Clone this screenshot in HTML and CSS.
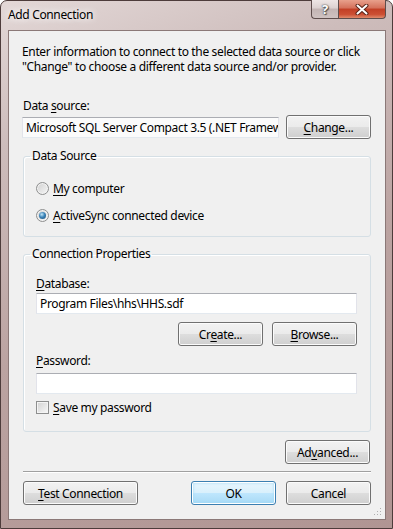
FILE: index.html
```html
<!DOCTYPE html>
<html lang="en">
<head>
    <meta charset="UTF-8">
    <meta name="viewport" content="width=device-width, initial-scale=1.0">
    <title>Add Connection</title>
    <link rel="stylesheet" href="styles.css">
</head>
<body>
    <div class="window">
        <div class="titlebar">
            <span class="title">Add Connection</span>
            <div class="caption-buttons">
                <span class="cap-btn help">?</span>
                <span class="cap-btn close">
                    <svg width="14" height="11" viewBox="0 0 14 11">
                        <path d="M2.5 1.5 L11.5 9.5 M11.5 1.5 L2.5 9.5" stroke="#5a2418" stroke-width="4" stroke-linecap="round"/>
                        <path d="M2.5 1.5 L11.5 9.5 M11.5 1.5 L2.5 9.5" stroke="#fff" stroke-width="2" stroke-linecap="round"/>
                    </svg>
                </span>
            </div>
        </div>

        <div class="client">
            <p class="intro">Enter information to connect to the selected data source or click<br>"Change" to choose a different data source and/or provider.</p>

            <label class="field-label">Data <u>s</u>ource:</label>
            <div class="source-row">
                <div class="textbox readonly">Microsoft SQL Server Compact 3.5 (.NET Framework Data Provider for SQL Server Compact 3.5)</div>
                <button type="button" class="btn"><u>C</u>hange...</button>
            </div>

            <fieldset class="group source-group">
                <legend>Data Source</legend>
                <label class="option">
                    <span class="radio"></span>
                    <span><u>M</u>y computer</span>
                </label>
                <label class="option">
                    <span class="radio checked"><span class="dot"></span></span>
                    <span><u>A</u>ctiveSync connected device</span>
                </label>
            </fieldset>

            <fieldset class="group props-group">
                <legend>Connection Properties</legend>
                <label class="field-label"><u>D</u>atabase:</label>
                <div class="textbox db-box">Program Files\hhs\HHS.sdf</div>
                <div class="btn-row">
                    <button type="button" class="btn">Cr<u>e</u>ate...</button>
                    <button type="button" class="btn"><u>B</u>rowse...</button>
                </div>
                <label class="field-label pw-label"><u>P</u>assword:</label>
                <div class="textbox pw-box"></div>
                <label class="option check-row">
                    <span class="checkbox"></span>
                    <span><u>S</u>ave my password</span>
                </label>
            </fieldset>

            <div class="advanced-row">
                <button type="button" class="btn">Ad<u>v</u>anced...</button>
            </div>

            <div class="separator"></div>

            <div class="footer">
                <button type="button" class="btn wide"><u>T</u>est Connection</button>
                <div class="footer-right">
                    <button type="button" class="btn default">OK</button>
                    <button type="button" class="btn">Cancel</button>
                </div>
            </div>

            <svg class="grip" width="8" height="8" viewBox="0 0 8 8">
                <rect x="6" y="0" width="1" height="1" fill="#b0b0b0"/>
                <rect x="3" y="3" width="1" height="1" fill="#b0b0b0"/>
                <rect x="6" y="3" width="1" height="1" fill="#b0b0b0"/>
                <rect x="0" y="6" width="1" height="1" fill="#b0b0b0"/>
                <rect x="3" y="6" width="1" height="1" fill="#b0b0b0"/>
                <rect x="6" y="6" width="1" height="1" fill="#b0b0b0"/>
            </svg>
        </div>
    </div>
</body>
</html>
```

FILE: styles.css
```css
* {
    margin: 0;
    padding: 0;
    box-sizing: border-box;
}

body {
    font-family: "Noto Sans", "Segoe UI", Arial, sans-serif;
    font-size: 12px;
    line-height: 15px;
    letter-spacing: -0.35px;
    color: #000;
    background: #fff;
    width: 393px;
    height: 529px;
    overflow: hidden;
}

u {
    text-decoration-thickness: 1px;
    text-underline-offset: 2px;
}

/* aero frame */
.window {
    width: 393px;
    height: 529px;
    display: flex;
    flex-direction: column;
    padding: 0 6px 8px 7px;
    border: 1px solid #4d3c3b;
    border-radius: 7px 7px 0 0;
    background: linear-gradient(160deg, #e3d8d7 0%, #cdbcbb 22%, #bba3a1 55%, #b09593 100%);
}

.titlebar {
    height: 29px;
    display: flex;
    justify-content: space-between;
    align-items: flex-start;
}

.title {
    padding-top: 6px;
    text-shadow: 0 0 6px #fff, 0 0 10px #fff;
}

.caption-buttons {
    display: flex;
    margin-top: -1px;
}

.cap-btn {
    height: 19px;
    display: flex;
    align-items: center;
    justify-content: center;
    border: 1px solid #5e4d4c;
    border-top: none;
}

.cap-btn.help {
    width: 27px;
    border-right: none;
    border-radius: 0 0 0 4px;
    background: linear-gradient(#eee6e5 0%, #dcd1d0 45%, #c3b4b3 50%, #cfc2c1 100%);
    color: #fff;
    font-weight: bold;
    font-size: 13px;
    text-shadow: 0 0 1px #444, 0 0 2px #555, 1px 1px 1px #555;
}

.cap-btn.close {
    width: 48px;
    border-radius: 0 0 4px 0;
    background: linear-gradient(#e8a08c 0%, #d4705a 45%, #c23f26 50%, #cc4f33 80%, #e08a6c 100%);
}

/* dialog area */
.client {
    flex: 1;
    position: relative;
    display: flex;
    flex-direction: column;
    background: #f0f0f0;
    border: 1px solid #8b7877;
    padding: 13px 14px 0 14px;
}

.intro {
    margin-left: -1px;
    white-space: nowrap;
}

.field-label {
    display: block;
    margin-top: 24px;
}

.source-row {
    display: flex;
    align-items: center;
    gap: 7px;
    margin-top: 2px;
}

.textbox {
    height: 21px;
    padding: 2px 3px 0;
    background: #fff;
    border: 1px solid #e2e3ea;
    border-top-color: #abadb3;
    border-bottom-color: #e3e9ef;
    white-space: nowrap;
    overflow: hidden;
}

.textbox.readonly {
    flex: 1;
    background: #fbfbfb;
    margin-left: -1px;
}

.btn {
    height: 24px;
    width: 85px;
    font: inherit;
    letter-spacing: inherit;
    color: #000;
    border: 1px solid #707070;
    border-radius: 3px;
    background: linear-gradient(#f2f2f2 0%, #ebebeb 48%, #dddddd 52%, #cfcfcf 100%);
    box-shadow: inset 0 0 0 1px #fbfbfb;
}

.btn.wide {
    width: 115px;
}

.btn.default {
    border-color: #3c7fb1;
    background: linear-gradient(#eaf6fd 0%, #d9f0fc 48%, #bee6fd 52%, #a7d9f5 100%);
    box-shadow: inset 0 0 0 1px #fff, inset 0 0 3px 1px #9fd9f7;
}

/* group boxes */
.group {
    border: 1px solid #d5dfe5;
    border-radius: 3px;
    box-shadow: inset 1px 1px 0 #fff;
    padding: 0 13px 0 12px;
}

.group legend {
    line-height: 14px;
    margin-left: -6px;
    padding: 0 2px;
}

.source-group {
    margin-top: 10px;
    padding-top: 17px;
    padding-bottom: 13px;
    display: flex;
    flex-direction: column;
    gap: 11px;
}

.option {
    display: flex;
    align-items: center;
    gap: 4px;
    height: 16px;
}

.radio {
    width: 13px;
    height: 13px;
    border-radius: 50%;
    border: 1px solid #8e8f8f;
    background: linear-gradient(135deg, #d0d0d0, #f6f6f6);
    box-shadow: inset 0 0 0 1px #f3f3f3;
    display: flex;
    align-items: center;
    justify-content: center;
}

.radio .dot {
    width: 7px;
    height: 7px;
    border-radius: 50%;
    background: radial-gradient(circle at 40% 35%, #c2e6f8 0%, #3c84b8 45%, #1c4d78 100%);
}

.checkbox {
    width: 13px;
    height: 13px;
    border: 1px solid #8e8f8f;
    background: linear-gradient(135deg, #d2d2d2, #f8f8f8);
    box-shadow: inset 0 0 0 1px #f4f4f4;
}

.props-group {
    margin-top: 10px;
    padding-top: 0;
    padding-bottom: 16px;
}

.props-group .field-label {
    margin-top: 15px;
}

.db-box {
    margin-top: 2px;
}

.btn-row {
    display: flex;
    justify-content: flex-end;
    gap: 9px;
    margin-top: 8px;
}

.props-group .pw-label {
    margin-top: 7px;
}

.pw-box {
    margin-top: 5px;
}

.check-row {
    margin-top: 6px;
    height: 15px;
}

.advanced-row {
    display: flex;
    justify-content: flex-end;
    margin-top: 8px;
    padding-right: 1px;
}

.separator {
    margin-top: 7px;
    border-top: 1px solid #a0a0a0;
    border-bottom: 1px solid #fff;
}

.footer {
    display: flex;
    justify-content: space-between;
    margin-top: 8px;
}

.footer-right {
    display: flex;
    gap: 10px;
}

.grip {
    position: absolute;
    right: 3px;
    bottom: 3px;
}
```
